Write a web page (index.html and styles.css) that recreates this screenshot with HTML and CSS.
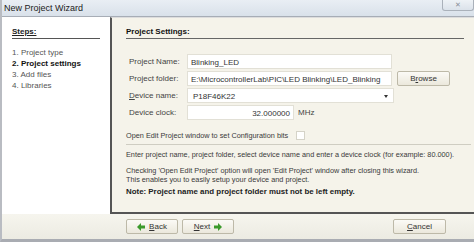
FILE: index.html
```html
<!DOCTYPE html>
<html lang="en">
<head>
    <meta charset="UTF-8">
    <title>New Project Wizard</title>
    <link rel="stylesheet" href="styles.css">
</head>
<body>
<div class="window">
    <div class="titlebar">
        <span class="title">New Project Wizard</span>
        <span class="close">&#x2715;</span>
    </div>
    <div class="main">
        <div class="steps">
            <div class="steps-head">Steps:</div>
            <ol class="step-list">
                <li>1. Project type</li>
                <li class="current">2. Project settings</li>
                <li>3. Add files</li>
                <li>4. Libraries</li>
            </ol>
        </div>
        <div class="content">
            <div class="section-head">Project Settings:</div>
            <div class="form">
                <div class="row">
                    <label class="lbl">Project Name:</label>
                    <div class="field wide">Blinking_LED</div>
                </div>
                <div class="row">
                    <label class="lbl">Project folder:</label>
                    <div class="field wide clip">E:\MicrocontrollerLab\PIC\LED Blinking\LED_Blinking</div>
                    <button class="btn browse">B<u>r</u>owse</button>
                </div>
                <div class="row">
                    <label class="lbl"><u>D</u>evice name:</label>
                    <div class="field select">P18F46K22<span class="arrow"></span></div>
                </div>
                <div class="row">
                    <label class="lbl">Device clock:</label>
                    <div class="field clock">32.000000</div>
                    <span class="unit">MHz</span>
                </div>
            </div>
            <div class="check-row">
                <span>Open Edit Project window to set Configuration bits</span>
                <span class="checkbox"></span>
            </div>
            <div class="notes">
                <p class="intro">Enter project name, project folder, select device name and enter a device clock (for example: 80.000).</p>
                <p class="hint">Checking 'Open Edit Project' option will open 'Edit Project' window after closing this wizard.<br>This enables you to easily setup your device and project.</p>
                <p class="bold">Note: Project name and project folder must not be left empty.</p>
            </div>
        </div>
    </div>
    <div class="footer">
        <div class="nav">
            <button class="btn navbtn">
                <svg width="8" height="8" viewBox="0 0 8 8"><path d="M0 4 L4 0 V2.5 H8 V5.5 H4 V8 Z" fill="#3b9a2c"/></svg>
                <span><u>B</u>ack</span>
            </button>
            <button class="btn navbtn">
                <span><u>N</u>ext</span>
                <svg width="8" height="8" viewBox="0 0 8 8"><path d="M8 4 L4 0 V2.5 H0 V5.5 H4 V8 Z" fill="#3b9a2c"/></svg>
            </button>
        </div>
        <button class="btn cancel"><u>C</u>ancel</button>
    </div>
</div>
</body>
</html>
```

FILE: styles.css
```css
html, body {
    margin: 0;
    padding: 0;
}

body {
    font-family: "Liberation Sans", Arial, sans-serif;
    font-size: 8px;
    color: #3a3a3a;
    background: #fff;
}

.window {
    width: 474px;
    height: 242px;
    overflow: hidden;
    display: flex;
    flex-direction: column;
    background: #f1efe5;
    border-left: 2px solid #b9bcc2;
    border-bottom: 3px solid #a9acb2;
    box-sizing: border-box;
}

.titlebar {
    height: 17px;
    flex: none;
    display: flex;
    justify-content: space-between;
    align-items: flex-start;
    background: linear-gradient(#e9eef4, #d9e1ea);
    border-bottom: 1px solid #a7adb6;
    box-sizing: border-box;
}

.title {
    font-size: 9px;
    color: #222;
    padding: 3px 0 0 2px;
}

.close {
    width: 30px;
    height: 10px;
    font-size: 7px;
    line-height: 10px;
    text-align: center;
    color: #8a8f98;
    background: linear-gradient(#eef2f6, #dbe2ea);
    border: 1px solid #aab1ba;
    border-top: none;
    border-radius: 0 0 3px 3px;
}

.main {
    flex: 1;
    display: flex;
    min-height: 0;
}

.steps {
    width: 108px;
    flex: none;
    background: #fff;
    padding: 10px 0 0 10px;
    box-sizing: border-box;
}

.steps-head {
    width: 88px;
    font-weight: bold;
    text-decoration: underline;
    color: #222;
    padding-bottom: 2px;
    border-bottom: 1px solid #555;
}

.step-list {
    list-style: none;
    margin: 8px 0 0;
    padding: 0;
}

.step-list li {
    height: 11px;
    line-height: 11px;
    color: #555;
}

.step-list .current {
    font-weight: bold;
    color: #111;
}

.content {
    flex: 1;
    background: #f5f3ea;
    border-left: 2px solid #555;
    border-bottom: 2px solid #555;
    border-top: 1px solid #ddd;
    padding: 9px 0 0 14px;
    box-sizing: border-box;
}

.section-head {
    width: 338px;
    font-weight: bold;
    color: #111;
    padding-bottom: 2px;
    border-bottom: 1px solid #666;
}

.form {
    margin-top: 14px;
    padding-left: 3px;
}

.row {
    display: flex;
    align-items: center;
    height: 16px;
    margin-bottom: 1px;
}

.lbl {
    width: 58px;
    flex: none;
    color: #444;
}

.field {
    height: 15px;
    line-height: 15px;
    background: #fff;
    border: 1px solid #e2e0d6;
    box-sizing: border-box;
    padding: 0 3px;
    color: #333;
    white-space: nowrap;
}

.wide {
    width: 205px;
}

.clip {
    overflow: hidden;
}

.select {
    width: 207px;
    position: relative;
    padding-left: 5px;
}

.arrow {
    position: absolute;
    right: 5px;
    top: 6px;
    border-left: 2.5px solid transparent;
    border-right: 2.5px solid transparent;
    border-top: 3px solid #333;
}

.clock {
    width: 107px;
    text-align: right;
}

.unit {
    margin-left: 4px;
    color: #444;
}

.btn {
    font-family: inherit;
    font-size: 8px;
    color: #333;
    height: 15px;
    padding: 0;
    background: linear-gradient(#fbfaf6, #ebe8dc);
    border: 1px solid #bdb9a8;
    border-radius: 2px;
}

.browse {
    width: 53px;
    margin-left: 5px;
}

.check-row {
    display: flex;
    align-items: center;
    margin-top: 11px;
    font-size: 7.3px;
}

.checkbox {
    width: 7px;
    height: 7px;
    margin-left: 8px;
    background: #fff;
    border: 1px solid #d5d3c8;
}

.notes {
    width: 345px;
    margin-top: 4px;
    border-top: 1px solid #cfcdc2;
    padding-top: 5px;
    font-size: 7.3px;
}

.notes p {
    margin: 0;
    line-height: 9px;
    white-space: nowrap;
}

.notes .intro {
    margin-bottom: 7px;
}

.notes .hint {
    margin-bottom: 3px;
}

.notes .bold {
    font-weight: bold;
    font-size: 7.9px;
    color: #222;
}

.footer {
    height: 25px;
    flex: none;
    display: flex;
    align-items: center;
    justify-content: space-between;
    padding: 0 28px 0 124px;
    background: linear-gradient(#f6f5ee, #ecebe2);
}

.nav {
    display: flex;
    gap: 4px;
}

.navbtn {
    width: 52px;
    display: flex;
    align-items: center;
    justify-content: center;
    gap: 4px;
}

.cancel {
    width: 53px;
}
```
